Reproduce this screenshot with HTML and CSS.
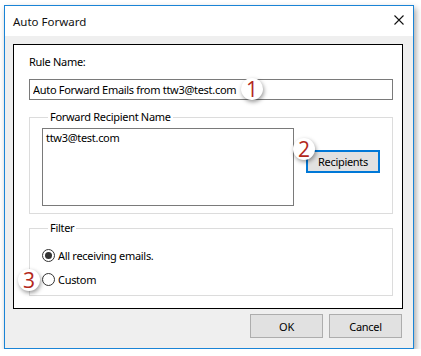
FILE: index.html
```html
<!DOCTYPE html>
<html>
<head>
  <link rel="stylesheet" href="styles.css">
</head>
<body>
  <div class="window">
    <div class="titlebar">
      <span class="title">Auto Forward</span>
      <span class="close">
        <svg width="10" height="10" viewBox="0 0 10 10"><path d="M0.5 0.5 L9.5 9.5 M9.5 0.5 L0.5 9.5" stroke="#111" stroke-width="1.1" fill="none"/></svg>
      </span>
    </div>
    <div class="content">
      <div class="panel">
        <div class="label">Rule Name:</div>
        <input class="textbox" type="text" value="Auto Forward Emails from ttw3@test.com">

        <fieldset class="group recipients-group">
          <legend>Forward Recipient Name</legend>
          <div class="recipient-row">
            <div class="recipient-list">ttw3@test.com</div>
            <button class="btn btn-focus">Recipients</button>
          </div>
        </fieldset>

        <fieldset class="group filter-group">
          <legend>Filter</legend>
          <div class="radio-row"><span class="radio checked"></span>All receiving emails.</div>
          <div class="radio-row"><span class="radio"></span>Custom</div>
        </fieldset>

        <!-- step markers -->
        <span class="badge badge-1">1</span>
        <span class="badge badge-2">2</span>
        <span class="badge badge-3">3</span>
      </div>
      <div class="actions">
        <button class="btn">OK</button>
        <button class="btn">Cancel</button>
      </div>
    </div>
  </div>
</body>
</html>
```

FILE: styles.css
```css
body {
  margin: 0;
  background: #fff;
  font-family: "Noto Sans", "Liberation Sans", sans-serif;
  font-size: 11px;
  letter-spacing: -0.3px;
  color: #000;
}

.window {
  width: 408px;
  margin: 5px 0 0 4px;
  border: 1px solid #1a84d6;
  box-shadow: 2px 3px 6px rgba(0, 0, 0, 0.35);
  background: #efefef;
}

.titlebar {
  display: flex;
  align-items: center;
  justify-content: space-between;
  height: 30px;
  padding: 0 9px 0 8px;
  background: #fff;
}

.title {
  font-size: 11.5px;
  letter-spacing: 0;
  color: #111;
}

.close {
  display: flex;
  margin-top: -3px;
}

.content {
  display: flex;
  flex-direction: column;
  padding: 8px 10px 10px 8px;
}

.panel {
  box-sizing: border-box;
  position: relative;
  height: 265px;
  padding: 9px 10px 0 15px;
  border: 1px solid #000;
  background: #fff;
}

.label {
  line-height: 16px;
}

.textbox {
  display: block;
  box-sizing: border-box;
  width: 364px;
  height: 21px;
  margin: 9px 0 0;
  padding: 0 3px;
  border: 1px solid #7a7a7a;
  font-family: inherit;
  font-size: 11px;
  letter-spacing: inherit;
  color: #000;
  outline: none;
}

.group {
  box-sizing: border-box;
  width: 364px;
  margin: 0;
  border: 1px solid #dcdcdc;
}

.group legend {
  margin-left: 6px;
  padding: 0 2px;
  line-height: 16px;
}

.recipients-group {
  height: 105px;
  margin-top: 9px;
  padding: 3px 12px 0 12px;
}

.recipient-row {
  display: flex;
  align-items: flex-start;
}

.recipient-list {
  box-sizing: border-box;
  width: 252px;
  height: 78px;
  padding: 1px 3px;
  border: 1px solid #7a7a7a;
}

.btn {
  box-sizing: border-box;
  width: 73px;
  height: 24px;
  border: 1px solid #adadad;
  background: #e1e1e1;
  font-family: inherit;
  font-size: 11px;
  letter-spacing: inherit;
  color: #000;
  padding: 0;
}

.btn-focus {
  width: 74px;
  height: 23px;
  margin: 22px 0 0 12px;
  border: 2px solid #0078d7;
}

.filter-group {
  height: 76px;
  margin-top: 6px;
  padding: 7px 12px 0 12px;
}

.radio-row {
  display: flex;
  align-items: center;
  height: 24px;
}

.radio {
  box-sizing: border-box;
  position: relative;
  width: 13px;
  height: 13px;
  margin-right: 3px;
  border: 1px solid #333;
  border-radius: 50%;
}

.radio.checked::after {
  content: "";
  position: absolute;
  top: 2px;
  left: 2px;
  width: 7px;
  height: 7px;
  border-radius: 50%;
  background: #333;
}

.actions {
  display: flex;
  justify-content: flex-end;
  gap: 6px;
  margin-top: 5px;
  padding-right: 1px;
}

.badge {
  position: absolute;
  width: 22px;
  height: 22px;
  border-radius: 50%;
  background: #fff;
  box-shadow: 1px 2px 4px rgba(0, 0, 0, 0.4);
  color: #b3281b;
  font-family: "Open Sans", sans-serif;
  font-size: 21px;
  letter-spacing: 0;
  line-height: 22px;
  text-align: center;
}

.badge-1 {
  left: 227px;
  top: 33px;
}

.badge-2 {
  left: 279px;
  top: 93px;
}

.badge-3 {
  left: 4px;
  top: 224px;
}
```
